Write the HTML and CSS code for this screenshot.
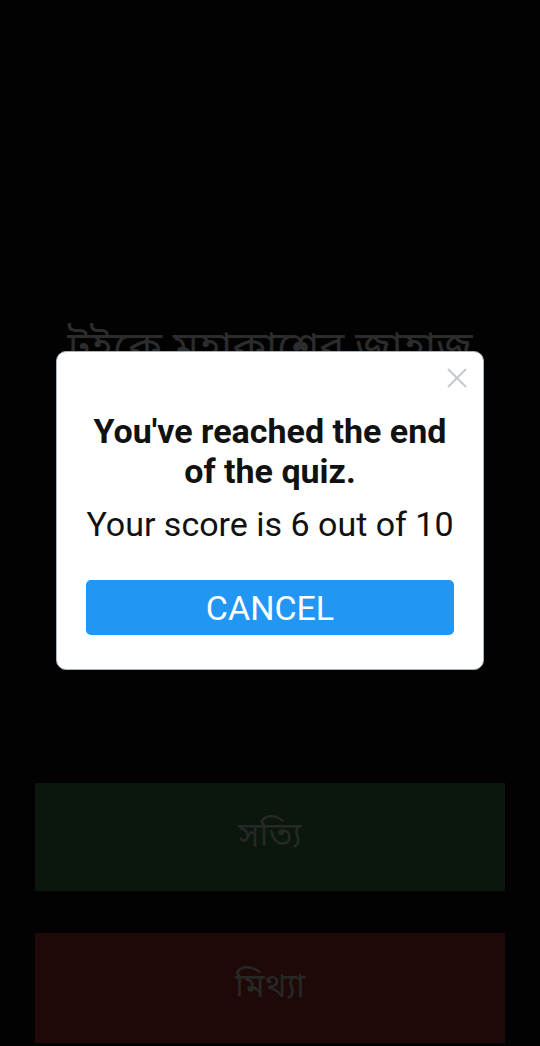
FILE: index.html
```html
<!DOCTYPE html>
<html lang="en">
<head>
<meta charset="utf-8">
<title>Quiz</title>
<link rel="stylesheet" href="styles.css">
</head>
<body>
<div class="screen">
  <div class="question">টুইকে মহাকাশের জাহাজ</div>
  <div class="answers">
    <div class="answer answer-true">সত্যি</div>
    <div class="answer answer-false">মিথ্যা</div>
  </div>
</div>
<div class="modal">
  <button class="close" aria-label="Close">
    <svg width="20" height="20" viewBox="0 0 20 20"><path d="M1 1L19 19M19 1L1 19" stroke="#c4c8d0" stroke-width="2" fill="none"/></svg>
  </button>
  <div class="title">You've reached the end<br>of the quiz.</div>
  <div class="score">Your score is 6 out of 10</div>
  <button class="cancel">CANCEL</button>
</div>
</body>
</html>
```

FILE: styles.css
```css
html, body {
  margin: 0;
  padding: 0;
  background: #020202;
  height: 1046px;
  overflow: hidden;
}
body {
  font-family: Roboto, "Noto Sans", sans-serif;
  position: relative;
}
.screen {
  display: flex;
  flex-direction: column;
  padding: 0 35px;
}
.question {
  margin-top: 320px;
  text-align: center;
  font-family: "Noto Sans Bengali", "Noto Sans", sans-serif;
  font-size: 42px;
  line-height: 60px;
  color: #2c2c2c;
  white-space: nowrap;
}
.answers {
  margin-top: 403px;
  display: flex;
  flex-direction: column;
  gap: 42px;
}
.answer {
  height: 108px;
  display: flex;
  align-items: center;
  justify-content: center;
  font-family: "Noto Sans Bengali", "Noto Sans", sans-serif;
  font-size: 34px;
  color: #252825;
}
.answer-true {
  background: #0b160d;
}
.answer-false {
  background: #1f0808;
  height: 110px;
}
.modal {
  position: absolute;
  left: 56px;
  top: 351px;
  width: 428px;
  height: 319px;
  box-sizing: border-box;
  background: #ffffff;
  border: 1px solid #a9b3bc;
  border-radius: 10px;
  padding: 59px 20px 0;
  display: flex;
  flex-direction: column;
  align-items: center;
}
.close {
  position: absolute;
  top: 16px;
  right: 16px;
  width: 20px;
  height: 20px;
  padding: 0;
  border: none;
  background: none;
  display: flex;
}
.title {
  font-size: 34px;
  font-weight: 700;
  line-height: 40px;
  color: #111111;
  text-align: center;
  white-space: nowrap;
}
.score {
  margin-top: 13px;
  font-size: 34px;
  line-height: 40px;
  color: #111111;
  text-align: center;
  white-space: nowrap;
}
.cancel {
  margin-top: 36px;
  width: 368px;
  height: 55px;
  border: none;
  border-radius: 5px;
  background: #2196f3;
  color: #ffffff;
  font-family: Roboto, sans-serif;
  font-size: 34px;
  padding: 0;
  flex-shrink: 0;
}
```
